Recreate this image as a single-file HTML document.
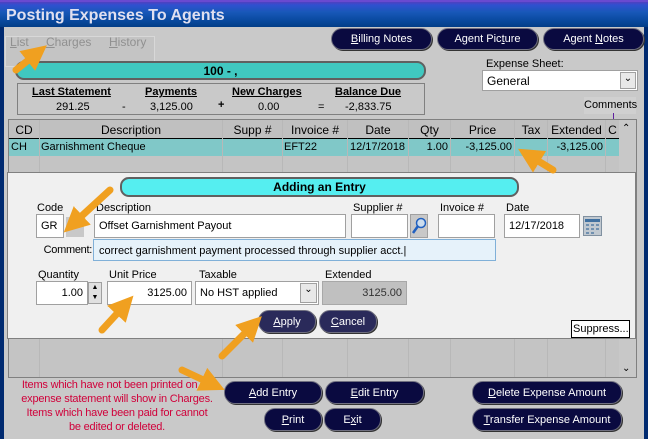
<!DOCTYPE html>
<html><head><meta charset="utf-8"><style>
*{box-sizing:border-box;margin:0;padding:0}
body{width:648px;height:439px;overflow:hidden;background:#c9c9c9;font-family:"Liberation Sans",sans-serif;font-size:11px;color:#000;position:relative}
.a{position:absolute}
.title{left:0;top:0;width:648px;height:27px;background:linear-gradient(#5040c0 0,#3050d0 3px,#1858b8 10px,#0a4aa0 18px,#003a80 27px);color:#e0e0f0;font-weight:bold;font-size:16px;padding:5px 0 0 6px;border-top:2px solid #6a4ad0}
.lb{left:0;top:27px;width:4px;height:412px;background:#002a70}
.rb{left:644px;top:27px;width:4px;height:412px;background:#002a70}
.tab{color:#909090;font-size:12px;top:35px}
.btn{background:#0a0a40;color:#fff;border-radius:11px;text-align:center;font-size:11px;border:1px solid #707080;box-shadow:1px 1px 0 #333}
.lbl{font-size:11px}
.in{background:#fff;border:1px solid #a0a0a0;font-size:11px;padding:4px 4px}
.hd{top:120px;height:19px;font-size:12px;text-align:center;padding-top:3px}
.cell{top:139px;height:16px;font-size:11px;padding-top:2px}
.u{text-decoration:underline}
</style></head><body>
<div class="a title">Posting Expenses To Agents</div>
<div class="a lb"></div><div class="a rb"></div>
<div class="a" style="left:5px;top:36px;width:150px;height:31px;background:#c4c4c4;border:1px solid #d8d8d8"></div>
<div class="a tab" style="left:10px"><span class="u">L</span>ist</div>
<div class="a tab" style="left:46px"><span class="u">C</span>harges</div>
<div class="a tab" style="left:109px"><span class="u">H</span>istory</div>
<div class="a btn" style="left:331px;top:28px;width:101px;height:22px;padding-top:4px"><span class="u">B</span>illing Notes</div>
<div class="a btn" style="left:437px;top:28px;width:101px;height:22px;padding-top:4px">Agent Pic<span class="u">t</span>ure</div>
<div class="a btn" style="left:543px;top:28px;width:101px;height:22px;padding-top:4px">Agent <span class="u">N</span>otes</div>
<div class="a" style="left:15px;top:61px;width:411px;height:19px;background:#40c8c0;border:2px solid #606060;border-radius:9px;text-align:center;font-weight:bold;font-size:12px;padding-top:1px">100 - ,</div>
<div class="a lbl" style="left:486px;top:58px">Expense Sheet:</div>
<div class="a" style="left:482px;top:70px;width:156px;height:21px;background:#fff;border:1px solid #a0a0a0;padding:3px 4px;font-size:12px">General</div>
<div class="a" style="left:620px;top:72px;width:16px;height:17px;background:#e8e8e8;border:1px solid #a0a0a0;text-align:center;font-size:10px">&#8964;</div>
<div class="a" style="left:17px;top:83px;width:408px;height:32px;border:1px solid #808080"></div>
<div class="a u" style="left:32px;top:86px;font-weight:bold;font-size:11px">Last Statement</div>
<div class="a u" style="left:145px;top:86px;font-weight:bold">Payments</div>
<div class="a u" style="left:232px;top:86px;font-weight:bold">New Charges</div>
<div class="a u" style="left:335px;top:86px;font-weight:bold">Balance Due</div>
<div class="a" style="left:56px;top:101px">291.25</div>
<div class="a" style="left:122px;top:101px">-</div>
<div class="a" style="left:150px;top:101px">3,125.00</div>
<div class="a" style="left:218px;top:99px;font-weight:bold">+</div>
<div class="a" style="left:258px;top:101px">0.00</div>
<div class="a" style="left:318px;top:101px">=</div>
<div class="a" style="left:345px;top:101px">-2,833.75</div>
<div class="a" style="left:584px;top:97px;width:52px;height:17px;background:#d0d0d0;font-size:11px;padding-top:2px;text-align:center">Comments</div>
<div class="a" style="left:613px;top:113px;width:1px;height:8px;background:#6020a0"></div>
<!-- grid -->
<div class="a" style="left:8px;top:119px;width:629px;height:259px;background:#c4c4c4;border:1px solid #808080"></div>
<div class="a" style="left:9px;top:120px;width:610px;height:18px;background:#c0c0c0"></div>
<div class="a" style="left:9px;top:138px;width:610px;height:1px;background:#000"></div>
<div class="a" style="left:9px;top:139px;width:610px;height:17px;background:#80c8c8"></div>
<div class="a" style="left:619px;top:120px;width:17px;height:257px;background:#c8c8c8"></div>
<div class="a" style="left:622px;top:123px;font-size:10px">&#8963;</div>
<div class="a" style="left:622px;top:363px;font-size:10px">&#8964;</div>
<div class="a" style="left:39px;top:120px;width:1px;height:257px;background:#b8b8b8"></div>
<div class="a" style="left:222px;top:120px;width:1px;height:257px;background:#b8b8b8"></div>
<div class="a" style="left:282px;top:120px;width:1px;height:257px;background:#b8b8b8"></div>
<div class="a" style="left:347px;top:120px;width:1px;height:257px;background:#b8b8b8"></div>
<div class="a" style="left:408px;top:120px;width:1px;height:257px;background:#b8b8b8"></div>
<div class="a" style="left:450px;top:120px;width:1px;height:257px;background:#b8b8b8"></div>
<div class="a" style="left:514px;top:120px;width:1px;height:257px;background:#b8b8b8"></div>
<div class="a" style="left:547px;top:120px;width:1px;height:257px;background:#b8b8b8"></div>
<div class="a" style="left:605px;top:120px;width:1px;height:257px;background:#b8b8b8"></div>
<div class="a hd" style="left:9px;width:30px">CD</div>
<div class="a hd" style="left:40px;width:182px">Description</div>
<div class="a hd" style="left:223px;width:59px">Supp #</div>
<div class="a hd" style="left:283px;width:64px">Invoice #</div>
<div class="a hd" style="left:348px;width:60px">Date</div>
<div class="a hd" style="left:409px;width:41px">Qty</div>
<div class="a hd" style="left:451px;width:63px">Price</div>
<div class="a hd" style="left:515px;width:32px">Tax</div>
<div class="a hd" style="left:548px;width:57px">Extended</div>
<div class="a hd" style="left:606px;width:13px">C</div>
<div class="a cell" style="left:11px">CH</div>
<div class="a cell" style="left:41px">Garnishment Cheque</div>
<div class="a cell" style="left:284px">EFT22</div>
<div class="a cell" style="left:350px">12/17/2018</div>
<div class="a cell" style="left:409px;width:39px;text-align:right">1.00</div>
<div class="a cell" style="left:451px;width:61px;text-align:right">-3,125.00</div>
<div class="a cell" style="left:548px;width:55px;text-align:right">-3,125.00</div>
<!-- dialog -->
<div class="a" style="left:7px;top:172px;width:629px;height:167px;background:#f0f0f0;border:1px solid #808080"></div>
<div class="a" style="left:120px;top:177px;width:399px;height:20px;background:#55eef0;border:2px solid #606060;border-radius:9px;text-align:center;font-weight:bold;font-size:12px;padding-top:1px">Adding an Entry</div>
<div class="a lbl" style="left:37px;top:202px">Code</div>
<div class="a lbl" style="left:96px;top:202px">Description</div>
<div class="a lbl" style="left:353px;top:202px">Supplier #</div>
<div class="a lbl" style="left:440px;top:202px">Invoice #</div>
<div class="a lbl" style="left:506px;top:202px">Date</div>
<div class="a in" style="left:36px;top:214px;width:28px;height:24px;padding-top:5px">GR</div>
<div class="a" style="left:66px;top:217px;width:18px;height:20px;background:#c8c8c8"></div>
<div class="a in" style="left:94px;top:214px;width:252px;height:24px;padding-top:5px">Offset Garnishment Payout</div>
<div class="a in" style="left:351px;top:214px;width:57px;height:24px"></div>
<div class="a" style="left:410px;top:214px;width:18px;height:24px;background:#c8c8c8;border:1px solid #a0a0a0"><svg width="16" height="22"><circle cx="10" cy="8" r="4.5" fill="#cde" stroke="#2060c0" stroke-width="1.5"/><line x1="7" y1="11" x2="2" y2="18" stroke="#2060c0" stroke-width="2.5"/></svg></div>
<div class="a in" style="left:438px;top:214px;width:57px;height:24px"></div>
<div class="a in" style="left:504px;top:214px;width:76px;height:24px;padding-top:5px">12/17/2018</div>
<div class="a" style="left:583px;top:216px;width:19px;height:20px;background:#c0c8d0;border:1px solid #8090a0"><svg width="17" height="18"><rect x="1" y="2" width="15" height="3" fill="#4070a0"/><g fill="#7090b0"><rect x="2" y="7" width="3" height="2"/><rect x="7" y="7" width="3" height="2"/><rect x="12" y="7" width="3" height="2"/><rect x="2" y="11" width="3" height="2"/><rect x="7" y="11" width="3" height="2"/><rect x="12" y="11" width="3" height="2"/><rect x="2" y="15" width="3" height="2"/><rect x="7" y="15" width="3" height="2"/></g></svg></div>
<div class="a lbl" style="left:30px;top:244px;width:62px;text-align:right;letter-spacing:-0.3px">Comment:</div>
<div class="a" style="left:93px;top:239px;width:403px;height:22px;background:#e6f2fa;border:1px solid #80b0d8;padding:5px 5px;font-size:11px">correct garnishment payment processed through supplier acct.|</div>
<div class="a lbl" style="left:38px;top:269px">Quantity</div>
<div class="a lbl" style="left:109px;top:269px">Unit Price</div>
<div class="a lbl" style="left:199px;top:269px">Taxable</div>
<div class="a lbl" style="left:325px;top:269px">Extended</div>
<div class="a in" style="left:36px;top:281px;width:52px;height:24px;text-align:right;padding-top:5px">1.00</div>
<div class="a" style="left:88px;top:282px;width:14px;height:22px;background:#e0e0e0;border:1px solid #a0a0a0;font-size:7px;text-align:center;line-height:10px">▲<br>▼</div>
<div class="a in" style="left:107px;top:281px;width:85px;height:24px;text-align:right;padding-top:5px">3125.00</div>
<div class="a in" style="left:195px;top:281px;width:124px;height:24px;padding-top:5px">No HST applied</div>
<div class="a" style="left:300px;top:283px;width:17px;height:20px;background:#e8e8e8;border:1px solid #a0a0a0;text-align:center;font-size:10px">&#8964;</div>
<div class="a" style="left:322px;top:281px;width:85px;height:24px;background:#c0c0c0;border:1px solid #a8a8a8;text-align:right;padding:5px 4px;color:#333">3125.00</div>
<div class="a btn" style="left:258px;top:310px;width:58px;height:23px;padding-top:5px;background:#2a2a5a"><span class="u">A</span>pply</div>
<div class="a btn" style="left:319px;top:310px;width:58px;height:23px;padding-top:5px;background:#2a2a5a"><span class="u">C</span>ancel</div>
<div class="a" style="left:571px;top:320px;width:59px;height:18px;background:#fff;border:1px solid #000;padding:2px 1px;font-size:11px">Suppress...</div>
<!-- bottom -->
<div class="a" style="left:4px;top:378px;width:226px;color:#d0003a;text-align:center;font-size:11px;line-height:14px;letter-spacing:-0.2px;white-space:nowrap">Items which have not been printed on an<br>expense statement will show in Charges.<br>Items which have been paid for cannot<br>be edited or deleted.</div>
<div class="a btn" style="left:224px;top:381px;width:98px;height:23px;padding-top:5px"><span class="u">A</span>dd Entry</div>
<div class="a btn" style="left:325px;top:381px;width:99px;height:23px;padding-top:5px"><span class="u">E</span>dit Entry</div>
<div class="a btn" style="left:264px;top:408px;width:58px;height:23px;padding-top:5px"><span class="u">P</span>rint</div>
<div class="a btn" style="left:324px;top:408px;width:57px;height:23px;padding-top:5px">E<span class="u">x</span>it</div>
<div class="a btn" style="left:472px;top:381px;width:150px;height:23px;padding-top:5px"><span class="u">D</span>elete Expense Amount</div>
<div class="a btn" style="left:472px;top:408px;width:150px;height:23px;padding-top:5px"><span class="u">T</span>ransfer Expense Amount</div>
<!-- arrows -->
<svg class="a" style="left:0;top:0" width="648" height="439">
<defs><marker id="h" markerWidth="3.6" markerHeight="3.6" refX="1.6" refY="1.8" orient="auto"><path d="M0,0 L3.6,1.8 L0,3.6 Z" fill="#f0a020"/></marker></defs>
<g stroke="#f0a020" stroke-width="7" stroke-linecap="round" fill="none" marker-end="url(#h)">
<line x1="16" y1="70" x2="36" y2="54"/>
<line x1="110" y1="190" x2="74" y2="223"/>
<line x1="553" y1="170" x2="530" y2="156"/>
<line x1="102" y1="330" x2="124" y2="306"/>
<line x1="222" y1="356" x2="252" y2="326"/>
<line x1="182" y1="370" x2="212" y2="384"/>
</g></svg>
</body></html>
